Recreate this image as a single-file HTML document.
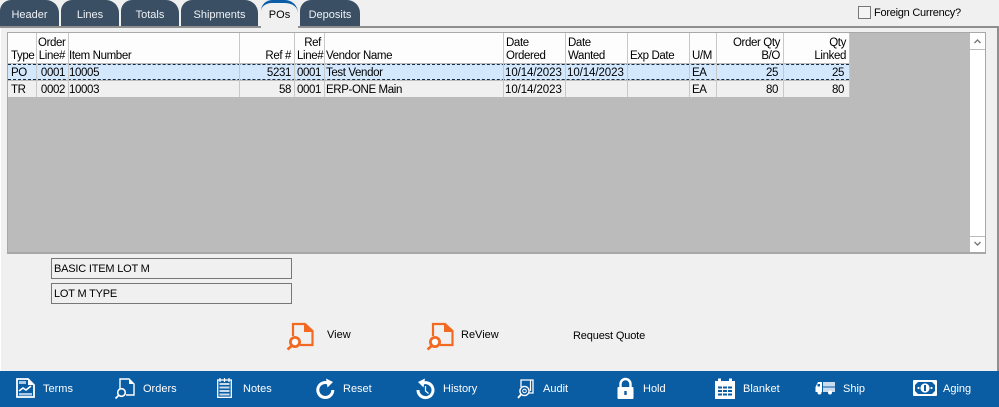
<!DOCTYPE html>
<html><head><meta charset="utf-8">
<style>
html,body{margin:0;padding:0}
body{width:999px;height:407px;position:relative;overflow:hidden;background:#f0f0f0;font-family:"Liberation Sans",sans-serif;font-size:11.5px;color:#000}
.a{position:absolute;white-space:nowrap}
.tab{position:absolute;top:0;height:26px;background:#3a4f63;border-radius:11px 13px 0 0;color:#eef2f6;font-size:11px;text-align:center;line-height:30px;box-sizing:border-box}
.cell{position:absolute;white-space:nowrap;box-sizing:border-box;padding:0 3px 0 2px;line-height:14px;overflow:hidden;letter-spacing:-.38px;margin-top:1px}
.d{letter-spacing:-.08px}
.r{text-align:right}
.q{padding-right:5px}
.btn{position:absolute;color:#fff;font-size:11px;top:382px;white-space:nowrap;line-height:14px}
.l{position:absolute;top:33px;width:1px;height:64px;background:#c8c8c8}
svg{position:absolute;overflow:visible}
</style></head><body>
<div class="a" style="left:0;top:26px;width:999px;height:2px;background:#8f8f8f"></div>
<div class="a" style="left:997px;top:28px;width:2px;height:343px;background:#8f8f8f"></div>
<div class="a" style="left:0;top:28px;width:1px;height:343px;background:#fff"></div>

<div class="tab" style="left:0;width:59px">Header</div>
<div class="tab" style="left:61px;width:58px">Lines</div>
<div class="tab" style="left:121px;width:58px">Totals</div>
<div class="tab" style="left:181px;width:77px">Shipments</div>
<div class="tab" style="left:261px;width:37px;height:28px;background:#f0f0f0;color:#000;border-top:3px solid #0a5ca6;line-height:25px">POs</div>
<div class="tab" style="left:300px;width:60px">Deposits</div>

<div class="a" style="left:858px;top:6px;width:11px;height:11px;border:1px solid #777;background:#f4f4f4"></div>
<div class="a" style="left:874px;top:6px;line-height:14px;font-size:11px;letter-spacing:-.25px">Foreign Currency?</div>

<!-- grid -->
<div class="a" style="left:7px;top:32px;width:979px;height:222px;background:#bbb;border:1px solid #a8a8a8;box-sizing:border-box;border-width:1px 2px 2px 1px"></div>
<!-- scrollbar -->
<div class="a" style="left:970px;top:33px;width:15px;height:219px;background:#fff"></div>
<div class="a" style="left:970px;top:49px;width:15px;height:1px;background:#bbb"></div>
<div class="a" style="left:970px;top:236px;width:15px;height:1px;background:#bbb"></div>
<svg style="left:970px;top:33px" width="15" height="16"><path d="M4.5 10 L7.5 7 L10.5 10" fill="none" stroke="#777" stroke-width="1.4"/></svg>
<svg style="left:970px;top:237px" width="15" height="15"><path d="M4.5 5 L7.5 8 L10.5 5" fill="none" stroke="#777" stroke-width="1.4"/></svg>

<!-- header bg -->
<div class="a" style="left:8px;top:33px;width:841px;height:30px;background:#fdfdfd"></div>
<!-- rows -->
<div class="a" style="left:8px;top:64px;width:841px;height:16px;background:#d3e8fd"></div>
<div class="a" style="left:8px;top:81px;width:841px;height:16px;background:#f0f0f0"></div>
<div class="a" style="left:8px;top:64px;width:841px;height:0;border-top:1px dashed #1a2a3a"></div>
<div class="a" style="left:8px;top:79px;width:841px;height:0;border-top:1px dashed #1a2a3a"></div>
<div class="a" style="left:8px;top:80px;width:841px;height:1px;background:#bdbdbd"></div>
<!-- column lines -->
<div class="l" style="left:36px"></div>
<div class="l" style="left:68px"></div>
<div class="l" style="left:239px"></div>
<div class="l" style="left:294px"></div>
<div class="l" style="left:324px"></div>
<div class="l" style="left:503px"></div>
<div class="l" style="left:565px"></div>
<div class="l" style="left:627px"></div>
<div class="l" style="left:689px"></div>
<div class="l" style="left:716px"></div>
<div class="l" style="left:783px"></div>
<div class="l" style="left:849px"></div>

<!-- header text -->
<div class="cell" style="left:9px;top:48px;width:28px">Type</div>
<div class="cell r" style="left:36px;top:35px;width:32px">Order</div>
<div class="cell r" style="left:36px;top:48px;width:32px">Line#</div>
<div class="cell" style="left:67px;top:48px;width:170px">Item Number</div>
<div class="cell r" style="left:240px;top:48px;width:54px">Ref #</div>
<div class="cell r" style="left:295px;top:35px;width:29px">Ref</div>
<div class="cell r" style="left:295px;top:48px;width:29px">Line#</div>
<div class="cell" style="left:324px;top:48px;width:170px">Vendor Name</div>
<div class="cell" style="left:504px;top:35px;width:60px">Date</div>
<div class="cell" style="left:504px;top:48px;width:60px">Ordered</div>
<div class="cell" style="left:566px;top:35px;width:60px">Date</div>
<div class="cell" style="left:566px;top:48px;width:60px">Wanted</div>
<div class="cell" style="left:628px;top:48px;width:60px">Exp Date</div>
<div class="cell" style="left:690px;top:48px;width:26px">U/M</div>
<div class="cell r" style="left:717px;top:35px;width:66px">Order Qty</div>
<div class="cell r" style="left:717px;top:48px;width:66px">B/O</div>
<div class="cell r" style="left:784px;top:35px;width:65px">Qty</div>
<div class="cell r" style="left:784px;top:48px;width:65px">Linked</div>

<!-- row 1 -->
<div class="cell" style="left:9px;top:65px;width:28px">PO</div>
<div class="cell r" style="left:36px;top:65px;width:32px">0001</div>
<div class="cell" style="left:67px;top:65px;width:170px">10005</div>
<div class="cell r" style="left:240px;top:65px;width:54px">5231</div>
<div class="cell r" style="left:295px;top:65px;width:29px">0001</div>
<div class="cell" style="left:324px;top:65px;width:170px">Test Vendor</div>
<div class="cell d" style="left:503px;top:65px;width:62px">10/14/2023</div>
<div class="cell d" style="left:565px;top:65px;width:62px">10/14/2023</div>
<div class="cell" style="left:690px;top:65px;width:26px">EA</div>
<div class="cell r q" style="left:717px;top:65px;width:66px">25</div>
<div class="cell r q" style="left:784px;top:65px;width:65px">25</div>
<!-- row 2 -->
<div class="cell" style="left:9px;top:82px;width:28px">TR</div>
<div class="cell r" style="left:36px;top:82px;width:32px">0002</div>
<div class="cell" style="left:67px;top:82px;width:170px">10003</div>
<div class="cell r" style="left:240px;top:82px;width:54px">58</div>
<div class="cell r" style="left:295px;top:82px;width:29px">0001</div>
<div class="cell" style="left:324px;top:82px;width:170px">ERP-ONE Main</div>
<div class="cell d" style="left:503px;top:82px;width:62px">10/14/2023</div>
<div class="cell" style="left:690px;top:82px;width:26px">EA</div>
<div class="cell r q" style="left:717px;top:82px;width:66px">80</div>
<div class="cell r q" style="left:784px;top:82px;width:65px">80</div>

<!-- labels -->
<div class="a" style="left:51px;top:258px;width:241px;height:21px;border:1px solid #777;box-sizing:border-box;padding-left:2px;line-height:20px;font-size:11px;letter-spacing:-.2px">BASIC ITEM LOT M</div>
<div class="a" style="left:51px;top:283px;width:241px;height:21px;border:1px solid #777;box-sizing:border-box;padding-left:2px;line-height:20px;font-size:11px;letter-spacing:-.2px">LOT M TYPE</div>

<!-- view buttons -->
<svg style="left:287px;top:322px" width="28" height="28"><path d="M6 14 V2 H18 L25.5 9 V23 H13" fill="none" stroke="#f26a21" stroke-width="2.2"/><path d="M17 2 V10 H26 Z" fill="#f26a21"/><circle cx="8" cy="20" r="4.6" fill="#fff" stroke="#f26a21" stroke-width="2.8"/><path d="M4.5 24 L0.5 27.5" stroke="#f26a21" stroke-width="2.6"/></svg>
<div class="a" style="left:327px;top:328px;line-height:14px;font-size:11px">View</div>
<svg style="left:427px;top:322px" width="28" height="28"><path d="M6 14 V2 H18 L25.5 9 V23 H13" fill="none" stroke="#f26a21" stroke-width="2.2"/><path d="M17 2 V10 H26 Z" fill="#f26a21"/><circle cx="8" cy="20" r="4.6" fill="#fff" stroke="#f26a21" stroke-width="2.8"/><path d="M4.5 24 L0.5 27.5" stroke="#f26a21" stroke-width="2.6"/></svg>
<div class="a" style="left:461px;top:328px;line-height:14px;font-size:11px">ReView</div>
<div class="a" style="left:573px;top:329px;line-height:14px;font-size:11px;letter-spacing:-.15px">Request Quote</div>

<!-- bottom bar -->
<div class="a" style="left:0;top:371px;width:999px;height:36px;background:#0a5ca3"></div>

<svg style="left:16px;top:378px" width="19" height="20"><path d="M1 1 H12 L18 7 V19 H1 Z" fill="none" stroke="#fff" stroke-width="1.8"/><path d="M12 1 V7 H18 Z" fill="#fff"/><rect x="3" y="3" width="7" height="3" fill="#a9c8e6"/><path d="M3 13 L7 10 L10 12 L15 8" fill="none" stroke="#fff" stroke-width="1.6"/><rect x="3" y="15" width="13" height="2.5" fill="#a9c8e6"/></svg>
<div class="btn" style="left:43px">Terms</div>

<svg style="left:115px;top:378px" width="20" height="21"><path d="M5 11 V1 H14 L19 6 V17 H11" fill="none" stroke="#fff" stroke-width="1.4"/><path d="M14 1 V6 H19 Z" fill="#fff"/><circle cx="6.5" cy="14.5" r="3.8" fill="none" stroke="#fff" stroke-width="1.6"/><path d="M3.5 17.5 L0.5 20.5" stroke="#fff" stroke-width="1.8"/></svg>
<div class="btn" style="left:143px">Orders</div>

<svg style="left:217px;top:378px" width="15" height="20"><rect x="0.7" y="2" width="13.6" height="17.3" fill="none" stroke="#fff" stroke-width="1.3"/><path d="M3 0 V4 M7.5 0 V4 M12 0 V4" stroke="#fff" stroke-width="1.2"/><rect x="2.5" y="5" width="10" height="2" fill="#c9dcef"/><rect x="2.5" y="8.5" width="10" height="2" fill="#c9dcef"/><rect x="2.5" y="12" width="10" height="2" fill="#c9dcef"/><rect x="2.5" y="15.5" width="10" height="2" fill="#c9dcef"/></svg>
<div class="btn" style="left:243px">Notes</div>

<svg style="left:316px;top:378px" width="19" height="21"><path d="M13 5.5 A7.5 7.5 0 1 0 16.8 12" fill="none" stroke="#fff" stroke-width="3"/><path d="M10 0.5 L17 4 L11.5 9.5 Z" fill="#fff"/></svg>
<div class="btn" style="left:343px">Reset</div>

<svg style="left:416px;top:378px" width="19" height="21"><path d="M6 5.5 A7.5 7.5 0 1 1 2 12" fill="none" stroke="#fff" stroke-width="3"/><path d="M9 0.5 L2 4 L7.5 9.5 Z" fill="#fff"/><path d="M9.5 8 V13 L12.5 15.5" fill="none" stroke="#fff" stroke-width="1.2"/></svg>
<div class="btn" style="left:443px">History</div>

<svg style="left:517px;top:378px" width="18" height="21"><path d="M4 9 V2 H16 V15 H12" fill="none" stroke="#fff" stroke-width="1.3"/><path d="M13.5 2 V13" stroke="#fff" stroke-width="1.2"/><circle cx="7.5" cy="13" r="4.6" fill="#0a5ca3" stroke="#fff" stroke-width="1.4"/><circle cx="7.5" cy="13" r="1.8" fill="none" stroke="#fff" stroke-width="1"/><path d="M4 16.5 L1 20" stroke="#fff" stroke-width="1.8"/></svg>
<div class="btn" style="left:543px">Audit</div>

<svg style="left:617px;top:378px" width="17" height="21"><path d="M3.5 9 V6 A5 5 0 0 1 13.5 6 V9" fill="none" stroke="#fff" stroke-width="2.4"/><rect x="0.5" y="9" width="16" height="12" rx="1" fill="#fff"/><rect x="7.3" y="13" width="2.4" height="4" fill="#0a5ca3"/></svg>
<div class="btn" style="left:643px">Hold</div>

<svg style="left:715px;top:378px" width="20" height="21"><rect x="0" y="3" width="20" height="18" fill="#fff"/><rect x="3" y="0.5" width="3" height="4" fill="#fff"/><rect x="14" y="0.5" width="3" height="4" fill="#fff"/><path d="M3 9.5 H17 M3 13 H17 M3 16.5 H17" stroke="#0a5ca3" stroke-width="2"/><path d="M7.5 8.5 V17.5 M12.5 8.5 V17.5" stroke="#fff" stroke-width="1"/></svg>
<div class="btn" style="left:743px">Blanket</div>

<svg style="left:815px;top:381px" width="20" height="14"><path d="M6 1 H3 L0.5 6 V11 H7 V1 Z" fill="#fff"/><rect x="8" y="1" width="12" height="4.5" fill="#c9dcef"/><rect x="8" y="6.5" width="12" height="4.5" fill="#c9dcef"/><circle cx="4.5" cy="11.5" r="2" fill="#fff"/><circle cx="15" cy="11.5" r="2" fill="#fff"/><rect x="2.5" y="3" width="2.5" height="2.5" fill="#0a5ca3"/></svg>
<div class="btn" style="left:843px">Ship</div>

<svg style="left:913px;top:380px" width="24" height="16"><rect x="0" y="0" width="24" height="16" rx="1" fill="#fff"/><rect x="2" y="2" width="20" height="12" fill="#0a5ca3"/><path d="M2 2 H5 L2 5 Z M22 2 H19 L22 5 Z M2 14 H5 L2 11 Z M22 14 H19 L22 11 Z" fill="#fff"/><circle cx="12" cy="8" r="4.6" fill="#fff"/><rect x="11" y="5" width="2" height="6" fill="#0a5ca3"/><circle cx="5.5" cy="8" r="1.1" fill="#fff"/><circle cx="18.5" cy="8" r="1.1" fill="#fff"/></svg>
<div class="btn" style="left:943px">Aging</div>
</body></html>
